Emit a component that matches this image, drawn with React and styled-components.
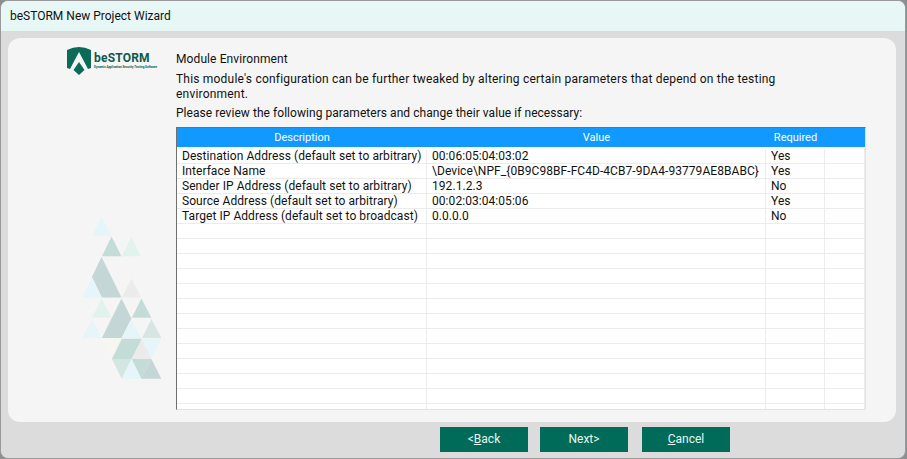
import React from "react";
import styled, { createGlobalStyle } from "styled-components";

const GlobalStyle = createGlobalStyle`
  html, body {
    margin: 0;
    padding: 0;
    background: #8d8f90;
  }
  body {
    width: 907px;
    height: 459px;
    overflow: hidden;
    font-family: Roboto, "Liberation Sans", sans-serif;
  }
`;

const Wizard = styled.div`
  width: 906px;
  height: 459px;
  box-sizing: border-box;
  border: 1px solid #9a9a9a;
  border-radius: 8px;
  background: #dcdcdc;
  display: flex;
  flex-direction: column;
  overflow: hidden;
`;

const TitleBar = styled.div`
  height: 30px;
  flex: none;
  background: #e6f7f5;
  color: #111;
  font-size: 12px;
  line-height: 30px;
  padding-left: 9px;
`;

const Panel = styled.div`
  margin: 7px 9px 0 7px;
  height: 384px;
  flex: none;
  border-radius: 12px;
  background: #f5f5f5;
  display: flex;
`;

const Side = styled.div`
  width: 168px;
  flex: none;
  display: flex;
  flex-direction: column;
`;

const Brand = styled.div`
  display: flex;
  margin: 9px 0 0 59px;
  gap: 3px;
`;

const BrandText = styled.div`
  padding-top: 5px;
  color: #0d5a4b;
`;

const BrandName = styled.div`
  font-size: 12px;
  font-weight: 700;
  line-height: 13px;
  letter-spacing: 0.2px;
`;

const BrandTag = styled.div`
  font-size: 3px;
  font-weight: 700;
  line-height: 5px;
  white-space: nowrap;
`;

const Mosaic = styled.svg`
  display: block;
  margin: 140px 0 0 72px;
`;

const Content = styled.div`
  flex: 1;
  min-width: 0;
  padding: 14px 30px 0 0;
  color: #111;
  font-size: 12px;
`;

const Heading = styled.div`
  line-height: 14px;
  letter-spacing: 0.1px;
`;

const Intro = styled.p`
  margin: 6px 0 0;
  line-height: 15px;
  width: 640px;
  letter-spacing: 0.2px;
`;

const Prompt = styled.p`
  margin: 4px 0 0;
  line-height: 14px;
  letter-spacing: 0.05px;
`;

const TableFrame = styled.div`
  margin-top: 7px;
  width: 690px;
  height: 283px;
  box-sizing: border-box;
  border-style: solid;
  border-width: 1px;
  border-color: #707070 #e2e2e2 #e2e2e2 #707070;
  background: #fff;
  overflow: hidden;
`;

const Grid = styled.table`
  width: 688px;
  table-layout: fixed;
  border-collapse: separate;
  border-spacing: 0;
`;

const HeadCell = styled.th`
  height: 19px;
  padding: 0;
  background: #1199ff;
  background-clip: padding-box;
  color: #fff;
  font-size: 11px;
  font-weight: 400;
  text-align: center;
  border-bottom: 2px solid #fff;
`;

const Cell = styled.td`
  height: 14px;
  padding: 0 0 0 5px;
  font-size: 12px;
  letter-spacing: 0.06px;
  line-height: 14px;
  color: #111;
  white-space: nowrap;
  overflow: hidden;
  border-right: 1px solid #ececec;
  border-bottom: 1px solid #ececec;
  box-sizing: content-box;
`;

const Footer = styled.div`
  display: flex;
  padding: 5px 0 0 439px;
`;

const WizardButton = styled.button`
  width: 88px;
  height: 25px;
  margin-right: ${(p) => p.$gap}px;
  padding: 0 0 1px;
  border: 0;
  background: #006b58;
  color: #e8f5f2;
  font-family: inherit;
  font-size: 12px;
`;

const Key = styled.span`
  text-decoration: underline;
`;

const rows = [
  ["Destination Address (default set to arbitrary)", "00:06:05:04:03:02", "Yes"],
  ["Interface Name", "\\Device\\NPF_{0B9C98BF-FC4D-4CB7-9DA4-93779AE8BABC}", "Yes"],
  ["Sender IP Address (default set to arbitrary)", "192.1.2.3", "No"],
  ["Source Address (default set to arbitrary)", "00:02:03:04:05:06", "Yes"],
  ["Target IP Address (default set to broadcast)", "0.0.0.0", "No"],
];

const blanks = Array.from({ length: 13 }, () => ["\u00a0", "\u00a0", "\u00a0"]);

const shards = [
  ["125,48 96,107 155,107", "#e6f5fa"],
  ["155,108 126,168 185,168", "#c3dcd7"],
  ["215,110 186,168 244,168", "#e2f3ee"],
  ["125,170 96,230 126,292 185,292", "#c4d6d6"],
  ["96,232 66,292 125,292", "#e6f5fa"],
  ["215,235 186,292 244,292", "#ebebeb"],
  ["125,295 96,353 155,353", "#e2f3ee"],
  ["185,295 215,355 185,414 126,414", "#c4d6d6"],
  ["245,295 216,353 275,353", "#c3dcd7"],
  ["96,357 66,414 125,414", "#e6f5fa"],
  ["215,357 186,414 245,414", "#e6f5fa"],
  ["275,357 247,414 305,414", "#d6e6e3"],
  ["126,416 185,416 156,475", "#f8f6f0"],
  ["186,416 246,416 216,477 156,477", "#c3dcd7"],
  ["246,416 216,477 275,477", "#ebebeb"],
  ["246,416 305,416 275,475", "#e6f5fa"],
  ["156,477 215,477 186,537", "#d3e6e2"],
  ["215,479 186,537 245,537", "#e6f5fa"],
  ["216,477 275,477 245,537", "#c3dcd7"],
  ["275,477 305,537 245,537", "#c4d6d6"],
];

const App = () => {
  return (
    <>
      <GlobalStyle />
      <Wizard>
        <TitleBar>beSTORM New Project Wizard</TitleBar>
        <Panel>
          <Side>
            <Brand>
              <svg width="24" height="28" viewBox="0 0 24 28">
                <path
                  fill="#0b6a58"
                  d="M0 3 Q6 0 12 0 Q18 0 24 3 V21 L21 22 L12 5 L3 22 L0 21 Z"
                />
                <path fill="#0b6a58" d="M12 15 L17.5 23 L12 28 L6.5 23 Z" />
              </svg>
              <BrandText>
                <BrandName>beSTORM</BrandName>
                <BrandTag>Dynamic Application Security Testing Software</BrandTag>
              </BrandText>
            </Brand>
            <Mosaic width="83" height="167" viewBox="60 45 250 500">
              {shards.map(([points, fill]) => (
                <polygon key={points} points={points} fill={fill} />
              ))}
            </Mosaic>
          </Side>
          <Content>
            <Heading>Module Environment</Heading>
            <Intro>
              This module's configuration can be further tweaked by altering certain parameters that
              depend on the testing environment.
            </Intro>
            <Prompt>Please review the following parameters and change their value if necessary:</Prompt>
            <TableFrame>
              <Grid>
                <colgroup>
                  <col style={{ width: 250 }} />
                  <col style={{ width: 339 }} />
                  <col style={{ width: 59 }} />
                  <col />
                </colgroup>
                <thead>
                  <tr>
                    <HeadCell>Description</HeadCell>
                    <HeadCell>Value</HeadCell>
                    <HeadCell>Required</HeadCell>
                    <HeadCell />
                  </tr>
                </thead>
                <tbody>
                  {[...rows, ...blanks].map((row, i) => (
                    <tr key={i}>
                      {row.map((text, j) => (
                        <Cell key={j}>{text}</Cell>
                      ))}
                      <Cell />
                    </tr>
                  ))}
                </tbody>
              </Grid>
            </TableFrame>
          </Content>
        </Panel>
        <Footer>
          <WizardButton $gap={12}>
            &lt;<Key>B</Key>ack
          </WizardButton>
          <WizardButton $gap={14}>Next&gt;</WizardButton>
          <WizardButton $gap={0}>
            <Key>C</Key>ancel
          </WizardButton>
        </Footer>
      </Wizard>
    </>
  );
};

export default App;
